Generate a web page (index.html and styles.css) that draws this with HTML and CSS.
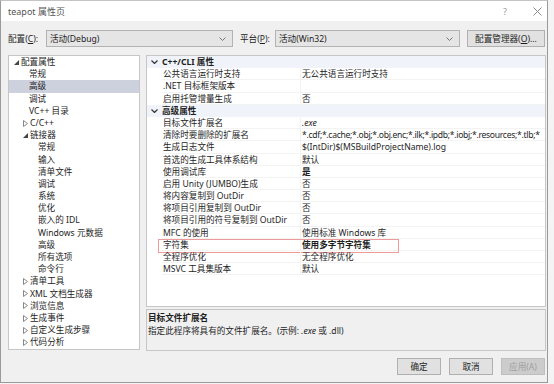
FILE: index.html
```html
<!DOCTYPE html>
<html lang="zh-CN">
<head>
  <meta charset="UTF-8" />
  <title>teapot 属性页</title>
  <link rel="stylesheet" href="styles.css">
</head>
<body>
  <div class="dialog">
    <div class="titlebar">
      <span class="title">teapot 属性页</span>
      <span class="tb-btn help">?</span>
      <span class="tb-btn close">
        <svg width="9" height="9" viewBox="0 0 9 9"><path d="M0.5 0.5L8.5 8.5M8.5 0.5L0.5 8.5" stroke="#8a8a8a" stroke-width="1" fill="none"/></svg>
      </span>
    </div>

    <div class="toolbar">
      <label class="tlabel cfg">配置(<u>C</u>):</label>
      <div class="combo combo-cfg">
        <span>活动(Debug)</span>
        <svg class="chev" width="7" height="4" viewBox="0 0 7 4"><path d="M0.5 0.5L3.5 3.5L6.5 0.5" stroke="#777" fill="none"/></svg>
      </div>
      <label class="tlabel plat">平台(<u>P</u>):</label>
      <div class="combo combo-plat">
        <span>活动(Win32)</span>
        <svg class="chev" width="7" height="4" viewBox="0 0 7 4"><path d="M0.5 0.5L3.5 3.5L6.5 0.5" stroke="#777" fill="none"/></svg>
      </div>
      <button class="btn btn-mgr">配置管理器(<u>O</u>)...</button>
    </div>

    <div class="main">
      <div class="tree">
        <div class="node l0"><span class="arrow"><svg width="5" height="5" viewBox="0 0 5 5"><path d="M5 0L5 5L0 5Z" fill="#444"/></svg></span>配置属性</div>
        <div class="node l1">常规</div>
        <div class="node l1 selected">高级</div>
        <div class="node l1">调试</div>
        <div class="node l1">VC++ 目录</div>
        <div class="node l1a"><span class="arrow"><svg width="5" height="7" viewBox="0 0 5 7"><path d="M0.5 0.5L4.5 3.5L0.5 6.5Z" stroke="#888" fill="none"/></svg></span>C/C++</div>
        <div class="node l1a"><span class="arrow"><svg width="5" height="5" viewBox="0 0 5 5"><path d="M5 0L5 5L0 5Z" fill="#444"/></svg></span>链接器</div>
        <div class="node l2">常规</div>
        <div class="node l2">输入</div>
        <div class="node l2">清单文件</div>
        <div class="node l2">调试</div>
        <div class="node l2">系统</div>
        <div class="node l2">优化</div>
        <div class="node l2">嵌入的 IDL</div>
        <div class="node l2">Windows 元数据</div>
        <div class="node l2">高级</div>
        <div class="node l2">所有选项</div>
        <div class="node l2">命令行</div>
        <div class="node l1a"><span class="arrow"><svg width="5" height="7" viewBox="0 0 5 7"><path d="M0.5 0.5L4.5 3.5L0.5 6.5Z" stroke="#888" fill="none"/></svg></span>清单工具</div>
        <div class="node l1a"><span class="arrow"><svg width="5" height="7" viewBox="0 0 5 7"><path d="M0.5 0.5L4.5 3.5L0.5 6.5Z" stroke="#888" fill="none"/></svg></span>XML 文档生成器</div>
        <div class="node l1a"><span class="arrow"><svg width="5" height="7" viewBox="0 0 5 7"><path d="M0.5 0.5L4.5 3.5L0.5 6.5Z" stroke="#888" fill="none"/></svg></span>浏览信息</div>
        <div class="node l1a"><span class="arrow"><svg width="5" height="7" viewBox="0 0 5 7"><path d="M0.5 0.5L4.5 3.5L0.5 6.5Z" stroke="#888" fill="none"/></svg></span>生成事件</div>
        <div class="node l1a"><span class="arrow"><svg width="5" height="7" viewBox="0 0 5 7"><path d="M0.5 0.5L4.5 3.5L0.5 6.5Z" stroke="#888" fill="none"/></svg></span>自定义生成步骤</div>
        <div class="node l1a"><span class="arrow"><svg width="5" height="7" viewBox="0 0 5 7"><path d="M0.5 0.5L4.5 3.5L0.5 6.5Z" stroke="#888" fill="none"/></svg></span>代码分析</div>
      </div>

      <div class="right">
        <div class="grid">
          <div class="section">
            <span class="expander"><svg width="7" height="4" viewBox="0 0 7 4"><path d="M0.5 0.5L3.5 3.5L6.5 0.5" stroke="#333" stroke-width="1.2" fill="none"/></svg></span>
            <span>C++/CLI 属性</span>
          </div>
          <div class="prop"><span class="name">公共语言运行时支持</span><span class="val">无公共语言运行时支持</span></div>
          <div class="prop"><span class="name">.NET 目标框架版本</span><span class="val"></span></div>
          <div class="prop"><span class="name">启用托管增量生成</span><span class="val">否</span></div>
          <div class="section">
            <span class="expander"><svg width="7" height="4" viewBox="0 0 7 4"><path d="M0.5 0.5L3.5 3.5L6.5 0.5" stroke="#333" stroke-width="1.2" fill="none"/></svg></span>
            <span>高级属性</span>
          </div>
          <div class="prop"><span class="name">目标文件扩展名</span><span class="val"><i>.exe</i></span></div>
          <div class="prop"><span class="name">清除时要删除的扩展名</span><span class="val tight">*.cdf;*.cache;*.obj;*.obj.enc;*.ilk;*.ipdb;*.iobj;*.resources;*.tlb;*</span></div>
          <div class="prop"><span class="name">生成日志文件</span><span class="val">$(IntDir)$(MSBuildProjectName).log</span></div>
          <div class="prop"><span class="name">首选的生成工具体系结构</span><span class="val">默认</span></div>
          <div class="prop"><span class="name">使用调试库</span><span class="val bold">是</span></div>
          <div class="prop"><span class="name">启用 Unity (JUMBO)生成</span><span class="val">否</span></div>
          <div class="prop"><span class="name">将内容复制到 OutDir</span><span class="val">否</span></div>
          <div class="prop"><span class="name">将项目引用复制到 OutDir</span><span class="val">否</span></div>
          <div class="prop"><span class="name">将项目引用的符号复制到 OutDir</span><span class="val">否</span></div>
          <div class="prop"><span class="name">MFC 的使用</span><span class="val">使用标准 Windows 库</span></div>
          <div class="prop marked"><span class="name">字符集</span><span class="val bold">使用多字节字符集</span><span class="mark"></span></div>
          <div class="prop"><span class="name">全程序优化</span><span class="val">无全程序优化</span></div>
          <div class="prop"><span class="name">MSVC 工具集版本</span><span class="val">默认</span></div>
        </div>
        <div class="desc">
          <div class="desc-title">目标文件扩展名</div>
          <div class="desc-text">指定此程序将具有的文件扩展名。(示例: <i>.exe</i> 或 .dll)</div>
        </div>
      </div>
    </div>

    <div class="footer">
      <button class="btn">确定</button>
      <button class="btn">取消</button>
      <button class="btn disabled">应用(A)</button>
    </div>
  </div>
</body>
</html>
```

FILE: styles.css
```css
* {
  box-sizing: border-box;
}

body {
  margin: 0;
  background-color: #f4f4f4;
  font-family: "Noto Sans", "Noto Sans CJK SC", sans-serif;
  font-size: 8.6px;
  color: #1e1e1e;
}

.dialog {
  width: 548px;
  height: 383px;
  background-color: #f0f0f0;
  border: 1px solid #9a9a9a;
  border-top-color: #c4c4c4;
  display: flex;
  flex-direction: column;
}

.titlebar {
  height: 20px;
  background-color: #fff;
  display: flex;
  align-items: center;
  padding-left: 7px;
  color: #555;
  font-size: 9px;
}

.title {
  flex: 1;
}

.tb-btn {
  width: 20px;
  display: flex;
  justify-content: center;
  color: #999;
}

.help {
  margin-right: 12px;
}

.toolbar {
  display: flex;
  align-items: center;
  height: 17px;
  margin-top: 9px;
  padding-left: 7px;
}

.tlabel {
  white-space: nowrap;
}

.cfg {
  width: 38px;
}

.plat {
  width: 35px;
  margin-left: 7px;
}

.combo {
  height: 17px;
  background-color: #e5e5e5;
  border: 1px solid #b3b3b3;
  display: flex;
  align-items: center;
  justify-content: space-between;
  padding: 0 6px 0 3px;
}

.combo-cfg {
  width: 187px;
}

.combo-plat {
  width: 185px;
}

.btn {
  height: 17px;
  width: 44px;
  padding: 0;
  font-family: inherit;
  font-size: inherit;
  color: #1e1e1e;
  background-color: #e1e1e1;
  border: 1px solid #b0b0b0;
}

.btn-mgr {
  width: 78px;
  margin-left: 7px;
}

.btn.disabled {
  color: #a0a0a0;
  background-color: #cccccc;
  border-color: #bfbfbf;
}

.main {
  display: flex;
  height: 296px;
  margin-top: 8px;
}

.tree {
  width: 132px;
  height: 295px;
  margin-left: 7px;
  background-color: #fff;
  border: 1px solid #c6c6c6;
}

.node {
  height: 12.2px;
  line-height: 12.2px;
  display: flex;
  align-items: center;
  white-space: nowrap;
}

.arrow {
  width: 7px;
  display: flex;
  align-items: center;
}

.l0 {
  padding-left: 5px;
}

.l1 {
  padding-left: 20px;
}

.l1a {
  padding-left: 14px;
}

.l2 {
  padding-left: 29px;
}

.selected {
  background-color: #cdd1de;
}

.right {
  width: 400px;
  margin-left: 6px;
  display: flex;
  flex-direction: column;
}

.grid {
  height: 252px;
  background-color: #fff;
  border: 1px solid #c6c6c6;
  overflow: hidden;
}

.section {
  height: 12.2px;
  line-height: 12.2px;
  display: flex;
  align-items: center;
  background-color: #f0f4fa;
  font-weight: bold;
}

.expander {
  width: 15px;
  display: flex;
  justify-content: center;
  align-items: center;
}

.prop {
  position: relative;
  height: 12.2px;
  line-height: 12px;
  margin-left: 15px;
  display: flex;
  border-bottom: 1px solid #f3f3f3;
  white-space: nowrap;
}

.name {
  width: 139px;
  padding-left: 1px;
  border-right: 1px solid #f3f3f3;
  overflow: hidden;
}

.val {
  flex: 1;
  padding-left: 1px;
  overflow: hidden;
}

.tight {
  letter-spacing: -0.3px;
}

.bold {
  font-weight: bold;
}

.mark {
  position: absolute;
  left: -4px;
  top: 0;
  width: 241px;
  height: 14px;
  border: 1px solid #ee9a9a;
}

.desc {
  height: 42px;
  margin-top: 2px;
  border: 1px solid #c6c6c6;
  padding: 2px 1px 0;
  line-height: 13px;
}

.desc-title {
  font-weight: bold;
}

.footer {
  display: flex;
  justify-content: flex-end;
  gap: 8px;
  padding-top: 7px;
  padding-right: 2px;
}
```
